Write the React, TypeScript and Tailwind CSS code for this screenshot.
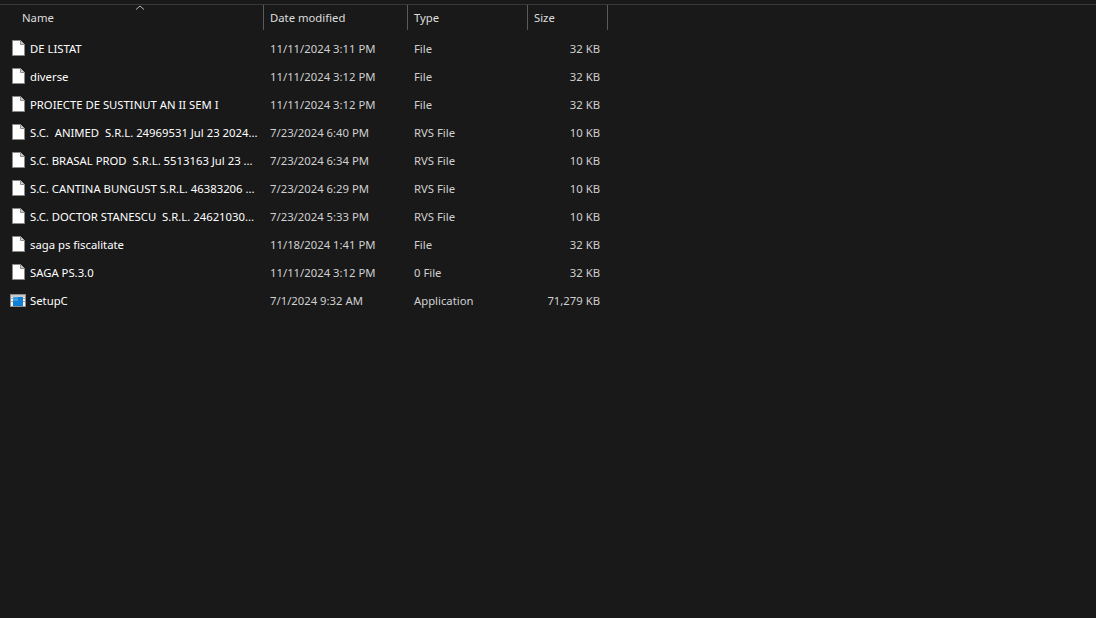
const rows = [
  ["DE LISTAT", "11/11/2024 3:11 PM", "File", "32 KB"],
  ["diverse", "11/11/2024 3:12 PM", "File", "32 KB"],
  ["PROIECTE DE SUSTINUT AN II SEM I", "11/11/2024 3:12 PM", "File", "32 KB"],
  ["S.C.  ANIMED  S.R.L. 24969531 Jul 23 2024...", "7/23/2024 6:40 PM", "RVS File", "10 KB"],
  ["S.C. BRASAL PROD  S.R.L. 5513163 Jul 23 ...", "7/23/2024 6:34 PM", "RVS File", "10 KB"],
  ["S.C. CANTINA BUNGUST S.R.L. 46383206 ...", "7/23/2024 6:29 PM", "RVS File", "10 KB"],
  ["S.C. DOCTOR STANESCU  S.R.L. 24621030...", "7/23/2024 5:33 PM", "RVS File", "10 KB"],
  ["saga ps fiscalitate", "11/18/2024 1:41 PM", "File", "32 KB"],
  ["SAGA PS.3.0", "11/11/2024 3:12 PM", "0 File", "32 KB"],
  ["SetupC", "7/1/2024 9:32 AM", "Application", "71,279 KB"],
];

function FileIcon() {
  return (
    <svg width="13" height="16" viewBox="0 0 13 16" className="shrink-0">
      <path d="M0.5 0.5H8.5L12.5 4.5V15.5H0.5Z" fill="#ffffff" stroke="#8a8a8a" strokeWidth="1" />
      <path d="M8.5 0.5V4.5H12.5" fill="#d0d0d0" stroke="#8a8a8a" strokeWidth="1" />
    </svg>
  );
}

function AppIcon() {
  return (
    <svg width="16" height="13" viewBox="0 0 16 13" className="shrink-0">
      <rect x="0.5" y="0.5" width="15" height="12" fill="#f4f4f4" stroke="#8c8c8c" />
      <rect x="1" y="1" width="14" height="2" fill="#c9c9c9" />
      <rect x="3" y="3" width="10" height="9" fill="#0f7fd6" />
      <rect x="3" y="3" width="5" height="4" fill="#3a9be6" />
      <rect x="1.5" y="4" width="1" height="1" fill="#555" />
      <rect x="1.5" y="7" width="1" height="1" fill="#555" />
      <rect x="13.5" y="4" width="1" height="1" fill="#555" />
      <rect x="13.5" y="7" width="1" height="1" fill="#555" />
    </svg>
  );
}

export default function App() {
  return (
    <div className="h-[618px] w-[1096px] overflow-hidden bg-[#191919] font-['Noto_Sans','Open_Sans',sans-serif] text-[11.3px] text-white">
      <div className="h-1 bg-[#191919]" />
      <div className="relative flex h-[26px] border-t border-[#3a3a3a] text-[#dedede]">
        <svg width="10" height="6" viewBox="0 0 10 6" className="absolute left-[135px] top-0">
          <path d="M1 4.5L5 1L9 4.5" fill="none" stroke="#b5b5b5" strokeWidth="1" />
        </svg>
        <div className="flex w-[264px] items-center border-r border-[#5a5a5a] pl-[22px] pt-[2px]">Name</div>
        <div className="flex w-[144px] items-center border-r border-[#5a5a5a] pl-[6px] pt-[2px]">Date modified</div>
        <div className="flex w-[120px] items-center border-r border-[#5a5a5a] pl-[6px] pt-[2px]">Type</div>
        <div className="flex w-[80px] items-center border-r border-[#5a5a5a] pl-[6px] pt-[2px]">Size</div>
      </div>
      <div className="mt-[5px] flex flex-col">
        {rows.map((r) => (
          <div key={r[0]} className="flex h-7 items-center leading-none">
            <div className="flex w-[264px] items-center">
              <div className="mb-[2px] flex w-[30px] shrink-0 justify-end pr-[5px]">
                {r[0] === "SetupC" ? <div className="mr-[-1px]"><AppIcon /></div> : <FileIcon />}
              </div>
              <span className="whitespace-pre">{r[0]}</span>
            </div>
            <div className="w-[144px] pl-[6px] text-[#d0d0d0]">{r[1]}</div>
            <div className="w-[120px] pl-[6px] text-[#d0d0d0]">{r[2]}</div>
            <div className="w-[72px] text-right text-[#d0d0d0]">{r[3]}</div>
          </div>
        ))}
      </div>
    </div>
  );
}
